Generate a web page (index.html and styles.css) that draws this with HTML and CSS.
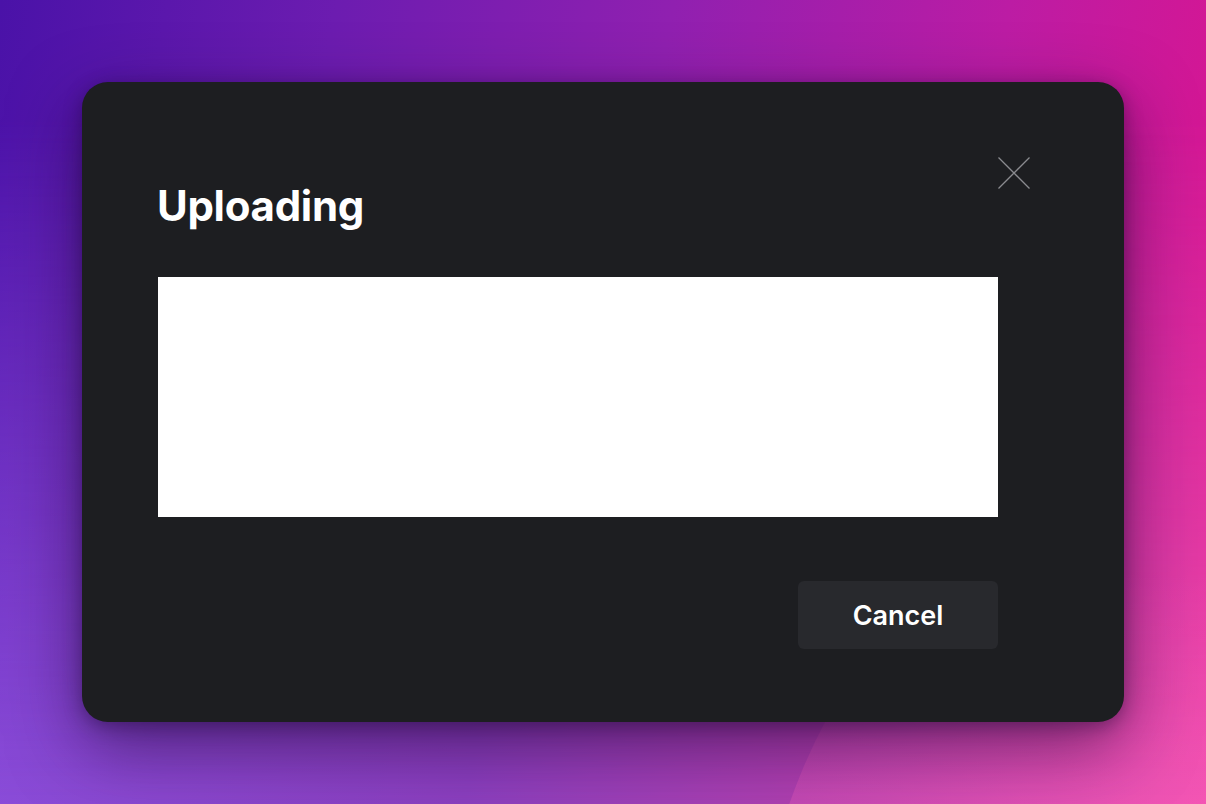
FILE: index.html
```html
<!DOCTYPE html>
<html lang="en">
<head>
<meta charset="utf-8">
<title>Uploading</title>
<link rel="stylesheet" href="styles.css">
</head>
<body>
<div class="backdrop">
  <div class="modal">
    <button class="close" aria-label="Close">
      <svg width="32" height="32" viewBox="0 0 32 32"><path d="M0.5 0.5 L31.5 31.5 M31.5 0.5 L0.5 31.5" stroke="#8a8b8f" stroke-width="1.3" fill="none"/></svg>
    </button>
    <h1 class="title">Uploading</h1>
    <div class="preview"></div>
    <div class="footer">
      <button class="cancel">Cancel</button>
    </div>
  </div>
</div>
</body>
</html>
```

FILE: styles.css
```css
html, body {
  margin: 0;
  padding: 0;
  height: 100%;
}
body {
  font-family: Inter, "Noto Sans", sans-serif;
  overflow: hidden;
}
.backdrop {
  position: relative;
  overflow: hidden;
  width: 1206px;
  height: 804px;
  box-sizing: border-box;
  padding: 82px 82px 0 82px;
  background: linear-gradient(100deg, #8a50e0 0%, #8c40c0 45%, #b040b0 70%, #f050b0 100%);
}
.backdrop::after {
  content: "";
  position: absolute;
  inset: 0;
  z-index: 0;
  background: linear-gradient(100deg, #4a12a8 0%, #6c1cb0 25%, #9020b0 50%, #bc1ca4 75%, #e0148c 100%);
  -webkit-mask-image: linear-gradient(to bottom, #000 0%, #000 15%, transparent 100%);
  mask-image: linear-gradient(to bottom, #000 0%, #000 15%, transparent 100%);
}
.backdrop::before {
  content: "";
  position: absolute;
  z-index: 1;
  left: 756px;
  top: 406px;
  width: 1188px;
  height: 1188px;
  border-radius: 50%;
  background: linear-gradient(to bottom, rgba(255,110,200,0) 0%, rgba(255,110,200,0) 14%, rgba(255,100,190,0.28) 34%);
}
.modal {
  position: relative;
  z-index: 2;
  width: 1042px;
  height: 640px;
  box-sizing: border-box;
  background: #1d1e21;
  border-radius: 26px;
  padding: 100px 126px 0 75px;
  box-shadow: 0 24px 70px rgba(30, 5, 50, 0.55), 0 4px 18px rgba(20, 0, 40, 0.35);
  display: flex;
  flex-direction: column;
}
.close {
  position: absolute;
  top: 75px;
  right: 94px;
  width: 32px;
  height: 32px;
  padding: 0;
  border: 0;
  background: none;
  cursor: pointer;
}
.close svg { display: block; }
.title {
  margin: 0;
  font-size: 42px;
  line-height: 48px;
  font-weight: 700;
  color: #ffffff;
  letter-spacing: -0.3px;
}
.preview {
  margin-top: 47px;
  margin-left: 1px;
  width: 840px;
  height: 240px;
  background: #ffffff;
}
.footer {
  margin-top: 64px;
  display: flex;
  justify-content: flex-end;
}
.cancel {
  width: 200px;
  height: 68px;
  border: 0;
  border-radius: 6px;
  background: #28292d;
  color: #ffffff;
  font-family: Inter, "Noto Sans", sans-serif;
  font-size: 27px;
  font-weight: 600;
  cursor: pointer;
}
```
